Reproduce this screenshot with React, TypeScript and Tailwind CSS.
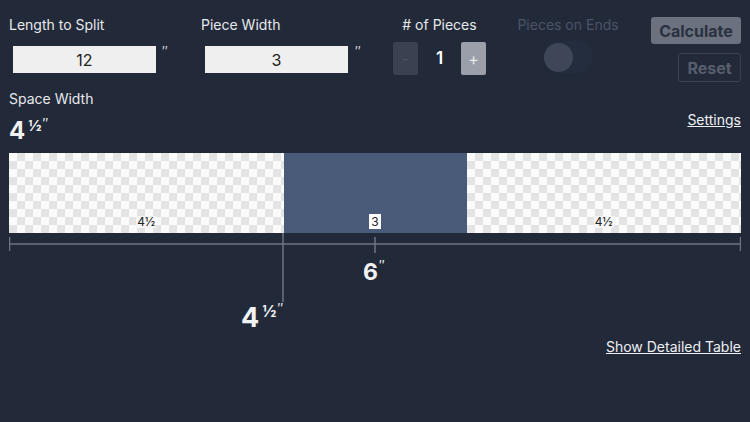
import React from 'react';

const Inch = ({ className = '' }: { className?: string }) => (
  <span className={`font-normal ${className}`}>″</span>
);

const Fraction = ({ whole, size }: { whole: string; size: 'sm' | 'lg' }) => (
  <span className="inline-flex items-start font-bold text-[#f1f2f4] leading-none">
    <span className={size === 'lg' ? 'text-[27px]' : 'text-[24px]'}>{whole}</span>
    <span className={size === 'lg' ? 'ml-[3px] mt-[-1px] text-[16px]' : 'ml-[3px] mt-[-1px] text-[15px]'}>½</span>
    <span className="ml-[1px] mt-[-2px] text-[13px] font-normal">″</span>
  </span>
);

const Checker = ({ label }: { label: string }) => (
  <div className="flex-1 h-full flex items-end justify-center pb-[5px] bg-[conic-gradient(#e4e4e4_25%,#fbfbfb_0_50%,#e4e4e4_0_75%,#fbfbfb_0)] bg-[length:16px_16px]">
    <span className="text-[12px] leading-none text-[#222] bg-[#f6f6f6] px-[1px]">{label}</span>
  </div>
);

export default function App() {
  return (
    <div className="w-[750px] h-[422px] bg-[#222a3a] text-[#e7e9ec] font-['Inter','Liberation_Sans',sans-serif] overflow-hidden">
      {/* top controls */}
      <div className="flex items-start px-[9px] pt-[15px]">
        <div className="w-[192px]">
          <p className="text-[14px] leading-[20px]">Length to Split</p>
          <div className="flex items-start mt-[11px]">
            <div className="ml-[4px] w-[143px] h-[27px] bg-[#efefef] flex items-center justify-center text-[16px] text-[#222]">
              12
            </div>
            <Inch className="ml-[6px] -mt-[4px] text-[13px] text-[#d6d8dc]" />
          </div>
        </div>
        <div className="w-[192px]">
          <p className="text-[14px] leading-[20px]">Piece Width</p>
          <div className="flex items-start mt-[11px]">
            <div className="ml-[4px] w-[143px] h-[27px] bg-[#efefef] flex items-center justify-center text-[16px] text-[#222]">
              3
            </div>
            <Inch className="ml-[7px] -mt-[4px] text-[13px] text-[#d6d8dc]" />
          </div>
        </div>
        <div className="w-[93px] flex flex-col items-center">
          <p className="text-[14px] leading-[20px] whitespace-nowrap">
            # of Pieces
          </p>
          <div className="w-full flex items-center justify-between mt-[7px]">
            <button className="w-[25px] h-[33px] rounded-[2px] bg-[#3a4252] text-[#4d5565] text-[14px]">-</button>
            <span className="text-[17px] font-semibold text-white">1</span>
            <button className="w-[25px] h-[33px] rounded-[2px] bg-[#9a9fa9] text-[#e9eaee] text-[16px]">+</button>
          </div>
        </div>
        <div className="ml-[32px] w-[100px] flex flex-col items-center">
          <p className="text-[14px] leading-[20px] text-[#4b5366] whitespace-nowrap">Pieces on Ends</p>
          <div className="mt-[6px] w-[50px] h-[32px] rounded-full bg-[#242d3d] flex items-center pl-[1px]">
            <div className="w-[29px] h-[29px] rounded-full bg-[#3e4657]" />
          </div>
        </div>
        <div className="ml-auto flex flex-col items-end">
          <button className="mt-[2px] w-[90px] h-[27px] rounded-[3px] bg-[#6b717e] text-[#2a3140] text-[16px] font-bold leading-none">
            Calculate
          </button>
          <button className="mt-[9px] w-[63px] h-[29px] rounded-[3px] border border-[#3a4252] text-[#575e6c] text-[16px] font-bold leading-none">
            Reset
          </button>
        </div>
      </div>

      {/* space width */}
      <div className="flex items-end justify-between px-[9px] mt-[7px]">
        <div>
          <p className="text-[14px] leading-[20px]">Space Width</p>
          <div className="mt-[10px]">
            <Fraction whole="4" size="sm" />
          </div>
        </div>
        <a className="text-[14px] underline text-[#eef0f3] mb-[15px]">Settings</a>
      </div>

      {/* bar */}
      <div className="mx-[9px] mt-[8px] h-[80px] flex">
        <Checker label="4½" />
        <div className="w-[183px] h-full bg-[#4a5b79] flex items-end justify-center pb-[4px]">
          <span className="text-[12px] leading-[15px] text-[#222] bg-white px-[2px]">3</span>
        </div>
        <Checker label="4½" />
      </div>

      {/* dimensions */}
      <div className="relative mx-[9px] h-[100px]">
        <svg width="732" height="70" className="block">
          <line x1="0" y1="11" x2="732" y2="11" stroke="#6d7484" strokeWidth="1.5" />
          <line x1="0.5" y1="4" x2="0.5" y2="18" stroke="#6d7484" strokeWidth="1.5" />
          <line x1="731.5" y1="4" x2="731.5" y2="18" stroke="#6d7484" strokeWidth="1.5" />
          <line x1="366" y1="4" x2="366" y2="20" stroke="#6d7484" strokeWidth="1.5" />
          <line x1="274" y1="0" x2="274" y2="69" stroke="#6d7484" strokeWidth="1.5" />
        </svg>
        <div className="absolute left-[354px] top-[28px]">
          <span className="inline-flex items-start font-bold text-[23px] leading-none text-[#f1f2f4]">
            6<span className="ml-[1px] mt-[-2px] text-[13px] font-normal">″</span>
          </span>
        </div>
        <div className="absolute left-[232px] top-[71px]">
          <Fraction whole="4" size="lg" />
        </div>
      </div>

      <div className="flex justify-end px-[9px] mt-[3px]">
        <a className="text-[14px] underline text-[#eef0f3]">Show Detailed Table</a>
      </div>
    </div>
  );
}
